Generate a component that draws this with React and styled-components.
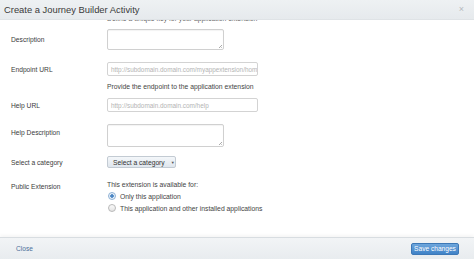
import React from 'react'
import styled, { createGlobalStyle } from 'styled-components'

const GlobalStyle = createGlobalStyle`
	html, body {
		margin: 0;
		padding: 0;
		background: #fff;
	}
	body {
		font-family: "Liberation Sans", Arial, sans-serif;
		color: #333;
	}
`

const Modal = styled.div`
	width: 474px;
	height: 259px;
	display: flex;
	flex-direction: column;
	background: #fff;
	overflow: hidden;
`

const Header = styled.div`
	height: 19px;
	flex: none;
	display: flex;
	align-items: center;
	justify-content: space-between;
	padding: 0 10px 0 4px;
	background: linear-gradient(#eef1f3, #e6eaed);
	border-bottom: 1px solid #dfe3e6;
	position: relative;
	z-index: 1;
	h3 {
		margin: 0;
		font-size: 9.4px;
		font-weight: normal;
		color: #3a3a3a;
	}
`

const CloseX = styled.span`
	font-size: 9px;
	color: #b5b9bd;
	line-height: 1;
`

const Body = styled.div`
	flex: 1;
	overflow: hidden;
	padding: 0 0 0 11px;
`

// body is scrolled a little, so the first hint is half hidden under the header
const Scroller = styled.div`
	margin-top: -5px;
`

const Row = styled.div`
	display: grid;
	grid-template-columns: 96px 1fr;
	align-items: ${(p) => (p.top ? 'start' : 'center')};
	margin-top: ${(p) => p.gap || 0}px;
`

const Label = styled.label`
	font-size: 6.7px;
	color: #3c3c3c;
	padding-top: ${(p) => p.pad || 0}px;
`

const Hint = styled.div`
	font-size: 6.8px;
	color: ${(p) => (p.faint ? '#666' : '#444')};
	margin-top: ${(p) => p.gap || 0}px;
	margin-left: 96px;
	white-space: nowrap;
`

const TextArea = styled.div`
	box-sizing: border-box;
	width: 117px;
	height: ${(p) => p.h}px;
	border: 1px solid #d0d0d0;
	border-radius: 2px;
	box-shadow: inset 0 1px 1px rgba(0, 0, 0, 0.05);
	position: relative;
	&::after {
		content: '';
		position: absolute;
		right: 1px;
		bottom: 1px;
		width: 3px;
		height: 3px;
		background: linear-gradient(135deg, transparent 45%, #aaa 50%, transparent 60%, transparent 75%, #aaa 80%, transparent 90%);
	}
`

const Input = styled.div`
	box-sizing: border-box;
	width: 151px;
	height: 14px;
	border: 1px solid #d3d3d3;
	border-radius: 2px;
	padding: 0 3px;
	display: flex;
	align-items: center;
	overflow: hidden;
	white-space: nowrap;
	font-size: 6.4px;
	color: #b4b4b4;
`

const Dropdown = styled.button`
	box-sizing: border-box;
	width: 69px;
	height: 12px;
	padding: 0 0 0 5px;
	display: flex;
	align-items: center;
	gap: 6px;
	border: 1px solid #c3cbd3;
	border-radius: 2px;
	background: linear-gradient(#f4f7fa, #dfe6ed);
	font-family: inherit;
	font-size: 6.7px;
	color: #333;
	white-space: nowrap;
	span {
		font-size: 4px;
		color: #555;
	}
`

const Options = styled.div`
	display: flex;
	flex-direction: column;
	gap: 4px;
	font-size: 6.8px;
	color: #444;
`

const Radio = styled.div`
	display: flex;
	align-items: center;
	gap: 4px;
	padding-left: 1px;
`

const Dot = styled.span`
	box-sizing: border-box;
	width: 8px;
	height: 8px;
	border-radius: 50%;
	border: 1px solid #b9b9b9;
	background: ${(p) => (p.on ? 'radial-gradient(circle, #4b86c4 0 1.5px, #e8f0f8 2px)' : 'linear-gradient(#fafafa, #e4e4e4)')};
	border-color: ${(p) => (p.on ? '#8fb2d6' : '#b9b9b9')};
`

const Footer = styled.div`
	height: 21px;
	flex: none;
	display: flex;
	align-items: center;
	justify-content: space-between;
	padding: 0 15px 0 16px;
	background: linear-gradient(#f2f4f6, #e8ecef);
	border-top: 1px solid #d8dde1;
	box-shadow: 0 -2px 3px rgba(0, 0, 0, 0.04);
`

const LinkBtn = styled.a`
	font-size: 6.6px;
	color: #4a6f9a;
`

const SaveBtn = styled.button`
	box-sizing: border-box;
	width: 48px;
	height: 12px;
	padding: 0;
	border: 1px solid #3d78b6;
	border-radius: 2px;
	background: linear-gradient(#6ea6dc, #3f82c7);
	color: #fff;
	font-family: inherit;
	font-size: 6.6px;
	white-space: nowrap;
`

export default function App() {
	return (
		<>
			<GlobalStyle />
			<Modal>
				<Header>
					<h3>Create a Journey Builder Activity</h3>
					<CloseX>×</CloseX>
				</Header>
				<Body>
					<Scroller>
						<Hint faint>Define a unique key for your application extension</Hint>
						<Row gap={7}>
							<Label>Description</Label>
							<TextArea h={21} />
						</Row>
						<Row gap={12}>
							<Label>Endpoint URL</Label>
							<Input>http://subdomain.domain.com/myappextension/hom</Input>
						</Row>
						<Hint gap={7}>Provide the endpoint to the application extension</Hint>
						<Row gap={8}>
							<Label>Help URL</Label>
							<Input>http://subdomain.domain.com/help</Input>
						</Row>
						<Row gap={12} top>
							<Label pad={5}>Help Description</Label>
							<TextArea h={23} />
						</Row>
						<Row gap={9}>
							<Label>Select a category</Label>
							<Dropdown>
								Select a category <span>▼</span>
							</Dropdown>
						</Row>
						<Row gap={13} top>
							<Label pad={2}>Public Extension</Label>
							<Options>
								<div>This extension is available for:</div>
								<Radio>
									<Dot on />
									Only this application
								</Radio>
								<Radio>
									<Dot />
									This application and other installed applications
								</Radio>
							</Options>
						</Row>
					</Scroller>
				</Body>
				<Footer>
					<LinkBtn>Close</LinkBtn>
					<SaveBtn>Save changes</SaveBtn>
				</Footer>
			</Modal>
		</>
	)
}
